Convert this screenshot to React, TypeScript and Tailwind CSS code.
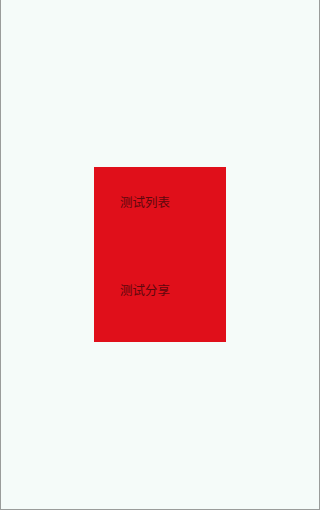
export default function App() {
  return (
    <div
      className="flex h-[510px] w-[320px] items-center justify-center border-x border-b border-x-[#9a9c9b] border-b-[#9a9c9b] bg-[#f5fbf9]"
      style={{ fontFamily: '"Noto Sans CJK SC", "Noto Sans", sans-serif' }}
    >
      <div className="flex h-[175px] w-[132px] flex-col gap-[68px] bg-[#e00f1a] pl-[26px] pt-[25px] text-[12.5px] leading-[20px] text-[#5e080d]">
        <span>测试列表</span>
        <span>测试分享</span>
      </div>
    </div>
  );
}
